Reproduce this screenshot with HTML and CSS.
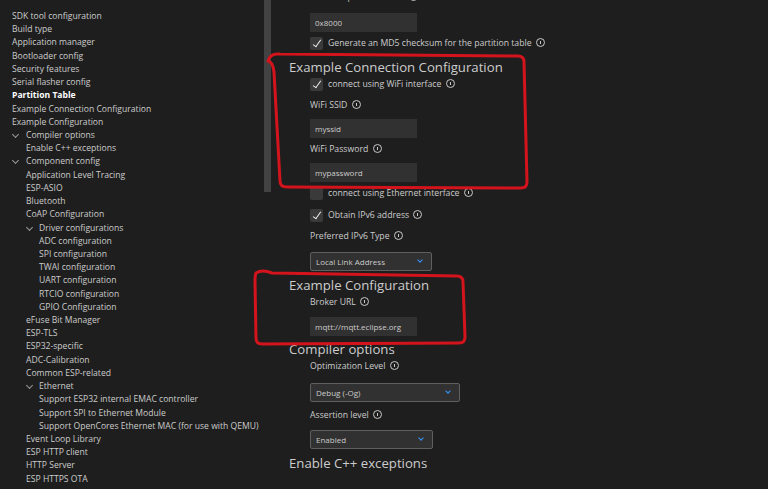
FILE: index.html
```html
<!DOCTYPE html>
<html>
<head>
  <title>ESP-IDF SDK Configuration Editor</title>
  <link rel="stylesheet" href="styles.css">
</head>
<body>
  <div class="layout">

    <!-- Menu tree -->
    <ul class="tree">
      <li>SDK tool configuration</li>
      <li>Build type</li>
      <li>Application manager</li>
      <li>Bootloader config</li>
      <li>Security features</li>
      <li>Serial flasher config</li>
      <li class="active">Partition Table</li>
      <li>Example Connection Configuration</li>
      <li>Example Configuration</li>
      <li class="open"><span class="chev"></span>Compiler options</li>
      <li class="l1">Enable C++ exceptions</li>
      <li class="open"><span class="chev"></span>Component config</li>
      <li class="l1">Application Level Tracing</li>
      <li class="l1">ESP-ASIO</li>
      <li class="l1">Bluetooth</li>
      <li class="l1">CoAP Configuration</li>
      <li class="l1 open"><span class="chev"></span>Driver configurations</li>
      <li class="l2">ADC configuration</li>
      <li class="l2">SPI configuration</li>
      <li class="l2">TWAI configuration</li>
      <li class="l2">UART configuration</li>
      <li class="l2">RTCIO configuration</li>
      <li class="l2">GPIO Configuration</li>
      <li class="l1">eFuse Bit Manager</li>
      <li class="l1">ESP-TLS</li>
      <li class="l1">ESP32-specific</li>
      <li class="l1">ADC-Calibration</li>
      <li class="l1">Common ESP-related</li>
      <li class="l1 open"><span class="chev"></span>Ethernet</li>
      <li class="l2">Support ESP32 internal EMAC controller</li>
      <li class="l2">Support SPI to Ethernet Module</li>
      <li class="l2">Support OpenCores Ethernet MAC (for use with QEMU)</li>
      <li class="l1">Event Loop Library</li>
      <li class="l1">ESP HTTP client</li>
      <li class="l1">HTTP Server</li>
      <li class="l1">ESP HTTPS OTA</li>
    </ul>

    <div class="scrollbar"></div>

    <!-- Settings -->
    <div class="content">
      <div class="label top">Offset of partition table <span class="info"></span></div>
      <div class="textbox">0x8000</div>
      <div class="check on">Generate an MD5 checksum for the partition table <span class="info"></span></div>

      <h3>Example Connection Configuration</h3>
      <div class="check on">connect using WiFi interface <span class="info"></span></div>
      <div class="label">WiFi SSID <span class="info"></span></div>
      <div class="textbox">myssid</div>
      <div class="label">WiFi Password <span class="info"></span></div>
      <div class="textbox">mypassword</div>
      <div class="check">connect using Ethernet interface <span class="info"></span></div>
      <div class="check on">Obtain IPv6 address <span class="info"></span></div>
      <div class="label">Preferred IPv6 Type <span class="info"></span></div>
      <div class="select w122">Local Link Address</div>

      <h3>Example Configuration</h3>
      <div class="label">Broker URL <span class="info"></span></div>
      <div class="textbox">mqtt://mqtt.eclipse.org</div>

      <h3>Compiler options</h3>
      <div class="label">Optimization Level <span class="info"></span></div>
      <div class="select w150">Debug (-Og)</div>
      <div class="label">Assertion level <span class="info"></span></div>
      <div class="select w123">Enabled</div>

      <h3>Enable C++ exceptions</h3>
    </div>
  </div>

  <!-- hand drawn marks -->
  <svg class="marks" width="768" height="489" viewBox="0 0 768 489">
    <path d="M268 61 Q270 53 280 54 L518 56 Q524 56 524 62 L527 182 Q527 188 521 188 L287 187 Q280 187 280 181 L274 72 Q273 62 268 61"/>
    <path d="M256 273 Q262 269 272 273 L457 276 Q463 276 463 282 L465 337 Q465 343 459 343 L262 344 Q256 344 256 338 L255 282 Q255 275 256 273"/>
  </svg>
</body>
</html>
```

FILE: styles.css
```css
body { margin: 0; background: #1e1e1e; color: #cccccc; font-family: "Open Sans", sans-serif; overflow: hidden; }
.layout { display: flex; height: 489px; overflow: hidden; }

.tree { list-style: none; margin: 0; padding: 10px 0 0 12px; width: 252px; flex: none; font-size: 8.6px; }
.tree li { height: 13.23px; line-height: 13.23px; white-space: nowrap; position: relative; }
.tree li.active { font-weight: bold; color: #ffffff; }
.tree li.l1 { padding-left: 14px; }
.tree li.l2 { padding-left: 27px; }
.tree li.open { margin-left: -14px; padding-left: 28px; }
.tree li.l1.open { padding-left: 41px; }
.chev { position: absolute; width: 4px; height: 4px; border-right: 1px solid #9a9a9a; border-bottom: 1px solid #9a9a9a; transform: rotate(45deg); top: 3px; left: 15px; }
.tree li.l1.open .chev { left: 29px; }

.scrollbar { width: 7px; height: 192px; background: #424242; flex: none; }

.content { padding-left: 18px; flex: 1; font-size: 8.7px; }
.content > * { margin-left: 21px; }
.content h3 { margin: 5px 0 0; height: 18px; line-height: 18px; font-size: 13.2px; font-weight: normal; color: #cccccc; }

.label { height: 14px; line-height: 14px; margin-top: 4px; }
.label.top { margin-top: -10px; }
.textbox { width: 102px; height: 19px; line-height: 19px; padding-left: 5px; margin-top: 7px; background: #313131; font-size: 8px; white-space: nowrap; }
.select { height: 17px; line-height: 17px; padding-left: 5px; margin-top: 10px; background: #313131; border: 1px solid #5f5f5f; border-radius: 2px; font-size: 8px; position: relative; }
.check { height: 13px; line-height: 13px; margin-top: 6px; padding-left: 18px; position: relative; white-space: nowrap; }

/* spacing between neighbours */
.label.top + .textbox { margin-top: 9px; }
.check + h3 { margin-top: 8px; }
h3 + .check { margin-top: 2px; }
h3 + .label { margin-top: 1px; }
.check + .label { margin-top: 7px; }
.textbox + .check { margin-top: 5px; }
.check + .check { margin-top: 9px; }
.check + .label + .select { margin-top: 9px; }
h3 + .label + .textbox { margin-top: 8px; }
h3 + .label + .select { margin-top: 10px; }
.select + h3 { margin-top: 5px; }
.textbox + h3 { margin-top: 4px; }
.select + .label { margin-top: 6px; }
.select + .label + .select { margin-top: 8px; }

.select::after { content: ""; position: absolute; right: 9px; top: 5px; width: 3px; height: 3px; border-right: 1.3px solid #3794ff; border-bottom: 1.3px solid #3794ff; transform: rotate(45deg); }
.w122 { width: 115px; }
.w150 { width: 143px; }
.w123 { width: 116px; }

.check::before { content: ""; position: absolute; left: 0; top: 0; width: 13px; height: 13px; background: #3a3a3a; border-radius: 2px; }
.check.on::after { content: ""; position: absolute; left: 5px; top: 1px; width: 3px; height: 8px; border-right: 1.5px solid #f0f0f0; border-bottom: 1.5px solid #f0f0f0; transform: rotate(35deg); }

.info { display: inline-block; width: 7px; height: 7px; border: 1px solid #c8c8c8; border-radius: 50%; margin-left: 2px; vertical-align: -1px; position: relative; }
.info::after { content: ""; position: absolute; left: 3px; top: 2px; width: 1px; height: 3px; background: #c8c8c8; }

.marks { position: absolute; left: 0; top: 0; pointer-events: none; }
.marks path { fill: none; stroke: #d4141c; stroke-width: 3; stroke-linecap: round; stroke-linejoin: round; }
```
